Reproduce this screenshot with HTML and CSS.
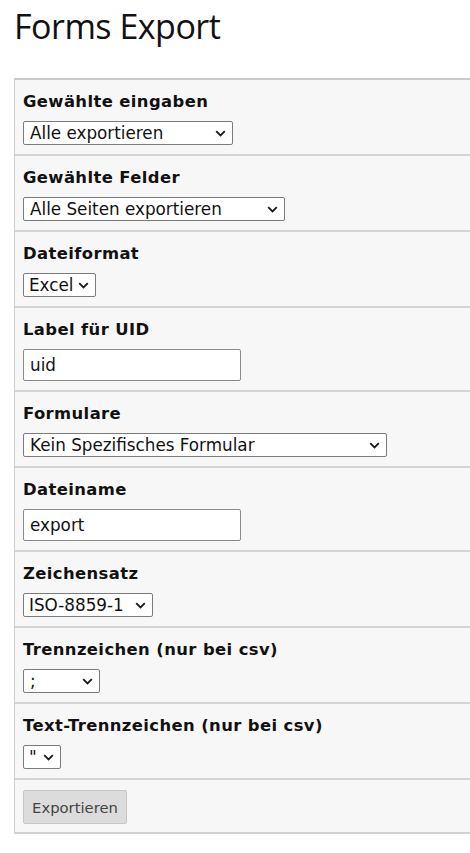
FILE: index.html
```html
<!DOCTYPE html>
<html lang="de">
<head>
<meta charset="utf-8">
<title>Forms Export</title>
<link rel="stylesheet" href="styles.css">
</head>
<body>
<h1 class="title">Forms Export</h1>
<form class="export-form">
  <div class="row">
    <label class="label" for="f1">Gewählte eingaben</label>
    <span class="select-wrap w-210">
      <select id="f1" class="select"><option>Alle exportieren</option></select>
      <svg class="chev" viewBox="0 0 11 7" width="11" height="7"><path d="M1.2 1.2 L5.5 5.5 L9.8 1.2" fill="none" stroke="#1a1a1a" stroke-width="1.8"/></svg>
    </span>
  </div>
  <div class="row">
    <label class="label" for="f2">Gewählte Felder</label>
    <span class="select-wrap w-262">
      <select id="f2" class="select"><option>Alle Seiten exportieren</option></select>
      <svg class="chev" viewBox="0 0 11 7" width="11" height="7"><path d="M1.2 1.2 L5.5 5.5 L9.8 1.2" fill="none" stroke="#1a1a1a" stroke-width="1.8"/></svg>
    </span>
  </div>
  <div class="row">
    <label class="label" for="f3">Dateiformat</label>
    <span class="select-wrap w-73 tight">
      <select id="f3" class="select"><option>Excel</option></select>
      <svg class="chev" viewBox="0 0 11 7" width="11" height="7"><path d="M1.2 1.2 L5.5 5.5 L9.8 1.2" fill="none" stroke="#1a1a1a" stroke-width="1.8"/></svg>
    </span>
  </div>
  <div class="row">
    <label class="label" for="f4">Label für UID</label>
    <input id="f4" class="input" type="text" value="uid">
  </div>
  <div class="row">
    <label class="label" for="f5">Formulare</label>
    <span class="select-wrap w-364">
      <select id="f5" class="select"><option>Kein Spezifisches Formular</option></select>
      <svg class="chev" viewBox="0 0 11 7" width="11" height="7"><path d="M1.2 1.2 L5.5 5.5 L9.8 1.2" fill="none" stroke="#1a1a1a" stroke-width="1.8"/></svg>
    </span>
  </div>
  <div class="row">
    <label class="label" for="f6">Dateiname</label>
    <input id="f6" class="input" type="text" value="export">
  </div>
  <div class="row">
    <label class="label" for="f7">Zeichensatz</label>
    <span class="select-wrap w-130 tight">
      <select id="f7" class="select"><option>ISO-8859-1</option></select>
      <svg class="chev" viewBox="0 0 11 7" width="11" height="7"><path d="M1.2 1.2 L5.5 5.5 L9.8 1.2" fill="none" stroke="#1a1a1a" stroke-width="1.8"/></svg>
    </span>
  </div>
  <div class="row">
    <label class="label" for="f8">Trennzeichen (nur bei csv)</label>
    <span class="select-wrap w-77">
      <select id="f8" class="select"><option>;</option></select>
      <svg class="chev" viewBox="0 0 11 7" width="11" height="7"><path d="M1.2 1.2 L5.5 5.5 L9.8 1.2" fill="none" stroke="#1a1a1a" stroke-width="1.8"/></svg>
    </span>
  </div>
  <div class="row">
    <label class="label" for="f9">Text-Trennzeichen (nur bei csv)</label>
    <span class="select-wrap w-38 tight">
      <select id="f9" class="select"><option>"</option></select>
      <svg class="chev" viewBox="0 0 11 7" width="11" height="7"><path d="M1.2 1.2 L5.5 5.5 L9.8 1.2" fill="none" stroke="#1a1a1a" stroke-width="1.8"/></svg>
    </span>
  </div>
  <div class="row row-last">
    <button type="button" class="button">Exportieren</button>
  </div>
</form>
</body>
</html>
```
FILE: styles.css
```css
html, body {
  margin: 0;
  padding: 0;
  background: #ffffff;
}
body {
  padding: 0 0 0 14px;
  font-family: "DejaVu Sans", Verdana, sans-serif;
  color: #000;
  overflow: hidden;
}
.title {
  margin: 0;
  padding-top: 2px;
  height: 76px;
  font-family: "Open Sans", sans-serif;
  font-weight: 400;
  font-size: 34px;
  line-height: 48px;
  color: #111;
  letter-spacing: -0.5px;
}
.export-form {
  display: flex;
  flex-direction: column;
  background: #f7f7f7;
  border-left: 1px solid #cfcfcf;
  border-bottom: 2px solid #d2d2d2;
  border-top: 2px solid #cbcbcb;
  width: 455px;
}
.row {
  display: flex;
  flex-direction: column;
  align-items: flex-start;
  padding: 12px 9px 9px 8px;
}
.row + .row {
  border-top: 2px solid #d4d4d4;
}
.label {
  display: block;
  font-weight: 700;
  font-size: 16.4px;
  line-height: 18px;
  letter-spacing: 0.4px;
  margin-top: 1px;
  margin-bottom: 10px;
  color: #111;
}
.select-wrap {
  position: relative;
  display: inline-block;
  height: 24px;
}
.select {
  -webkit-appearance: none;
  appearance: none;
  box-sizing: border-box;
  width: 100%;
  height: 24px;
  margin: 0;
  padding: 0 20px 0 6px;
  border: 1px solid #7b7b7b;
  border-radius: 2px;
  background: #fff;
  font-family: "DejaVu Sans", Verdana, sans-serif;
  font-size: 16.8px;
  line-height: 22px;
  color: #111;
}
.tight .select {
  padding-left: 5px;
}
.chev {
  position: absolute;
  right: 7px;
  top: 9px;
  pointer-events: none;
}
.w-210 { width: 210px; }
.w-262 { width: 262px; }
.w-73 { width: 73px; }
.w-364 { width: 364px; }
.w-130 { width: 130px; }
.w-77 { width: 77px; }
.w-38 { width: 38px; }
.input {
  box-sizing: border-box;
  width: 218px;
  height: 32px;
  margin: 0;
  padding: 0 6px;
  border: 1px solid #8a8a8a;
  border-radius: 2px;
  background: #fff;
  font-family: "DejaVu Sans", Verdana, sans-serif;
  font-size: 16.8px;
  color: #111;
}
.row-last {
  padding-top: 10px;
  padding-bottom: 8px;
}
.button {
  box-sizing: border-box;
  height: 34px;
  width: 104px;
  padding: 0;
  border: 1px solid #c6c6c6;
  border-radius: 2px;
  background: #dcdcdc;
  font-family: "DejaVu Sans", Verdana, sans-serif;
  font-size: 14.8px;
  color: #444;
}
```
